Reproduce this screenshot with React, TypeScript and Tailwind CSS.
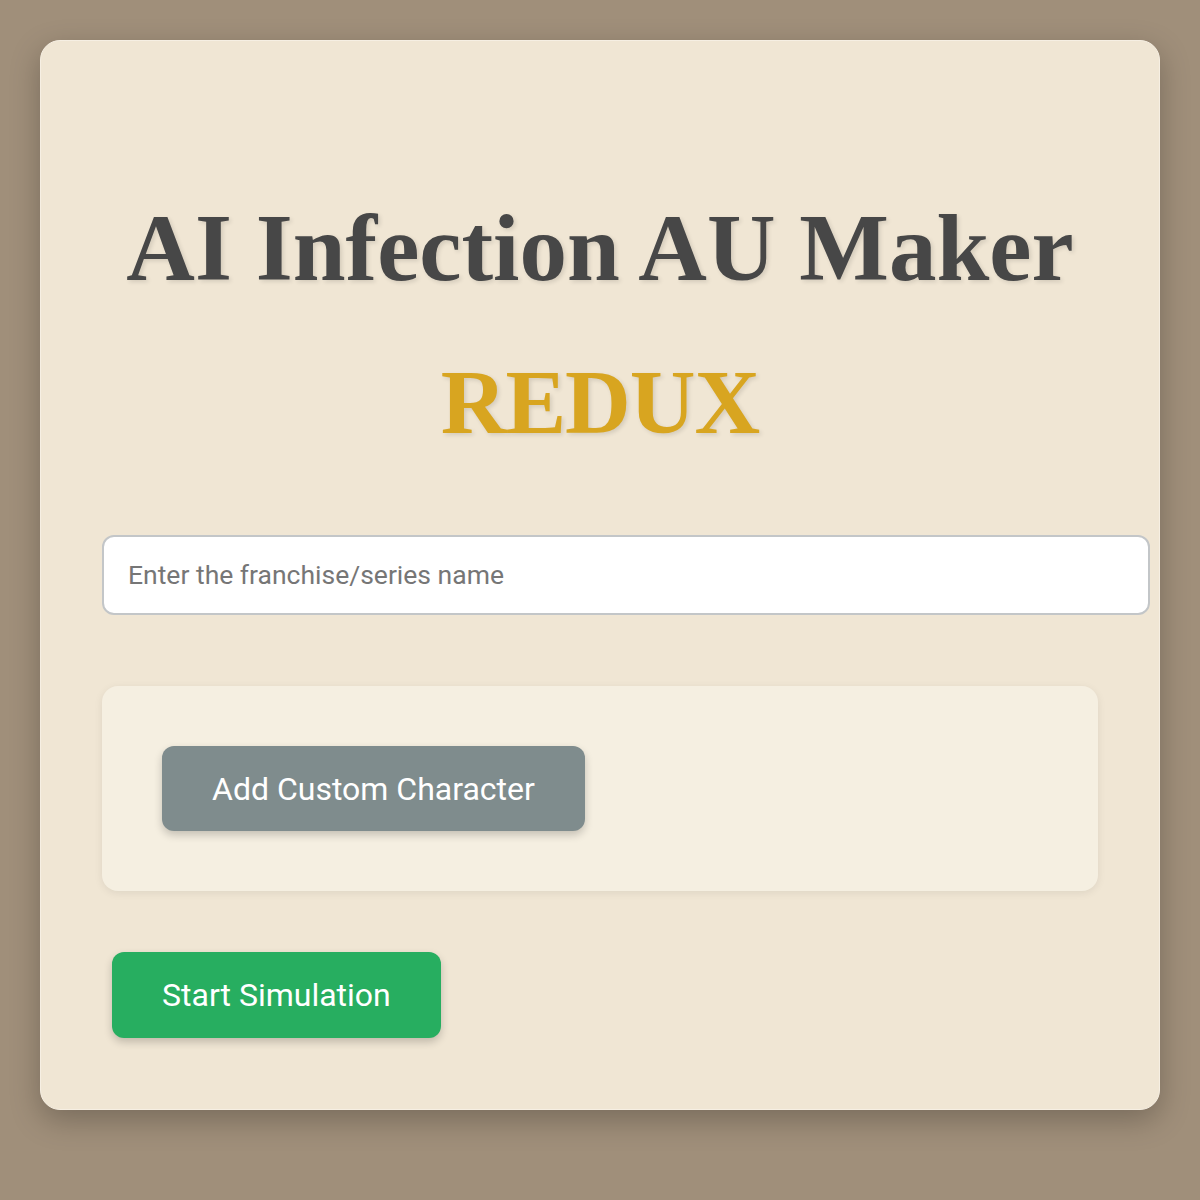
export default function App() {
  return (
    <div className="min-h-[1200px] bg-[#a08f7a] px-10 pt-10 pb-[90px] font-['Roboto',sans-serif]">
      <div className="rounded-[20px] border border-[#f6efe3] bg-[#f0e6d4] px-[61px] pt-[152px] pb-[71px] shadow-[0_10px_30px_rgba(0,0,0,0.25)]">
        <h1 className="flex flex-col items-center font-['Liberation_Serif',serif] font-bold [text-shadow:2px_2px_4px_rgba(0,0,0,0.12)]">
          <span className="text-[95px] leading-[110px] text-[#474747]">AI Infection AU Maker</span>
          <span className="mt-[45px] text-[91px] leading-[110px] tracking-[-1px] text-[#d8a520]">REDUX</span>
        </h1>

        <input
          type="text"
          placeholder="Enter the franchise/series name"
          className="mt-[77px] box-content block w-full rounded-xl border-2 border-[#c3c6c8] bg-white px-6 py-[23px] text-[26.5px] leading-[30px] text-[#333] placeholder:text-[#767676] outline-none"
        />

        <div className="mt-[71px] rounded-2xl bg-[#f5efe1] p-[60px] shadow-[0_2px_8px_rgba(0,0,0,0.08)]">
          <button
            type="button"
            className="h-[85px] rounded-xl bg-[#7f8c8d] px-[50px] text-[32px] text-white shadow-[0_4px_8px_rgba(0,0,0,0.2)]"
          >
            Add Custom Character
          </button>
        </div>

        <button
          type="button"
          className="ml-[10px] mt-[61px] h-[86px] rounded-xl bg-[#27ae60] px-[50px] text-[32px] text-white shadow-[0_4px_8px_rgba(0,0,0,0.2)]"
        >
          Start Simulation
        </button>
      </div>
    </div>
  );
}
